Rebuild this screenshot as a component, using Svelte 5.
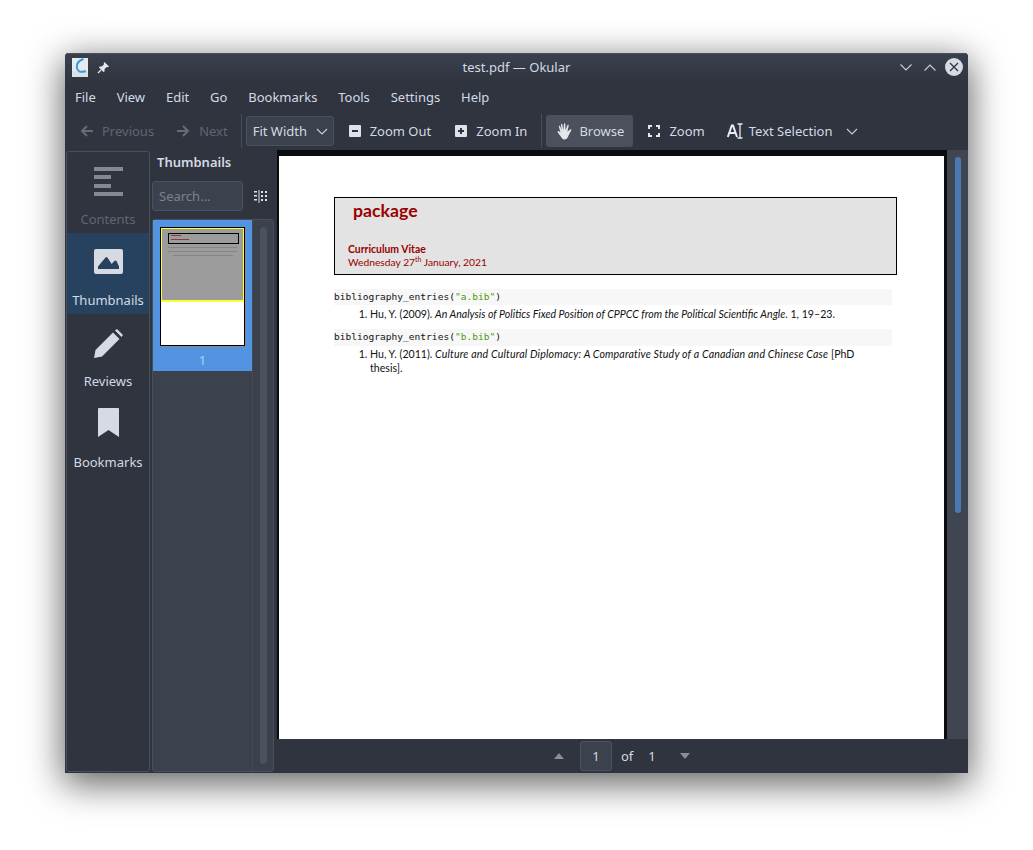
<script>
  const menus = ['File', 'View', 'Edit', 'Go', 'Bookmarks', 'Tools', 'Settings', 'Help'];
</script>

<div class="desktop">
  <div class="window">
    <header class="titlebar">
      <svg class="logo" width="17" height="19" viewBox="0 0 17 19">
        <rect width="16" height="19" fill="#e8ebee" />
        <path d="M0 14h16M0 16h16M0 18h16" stroke="#d2d6da" />
        <path d="M11.500 1C7 2.500 4.500 6 4.800 9.500c.3 3.500 3.500 5.500 9 3.500" fill="none" stroke="#2f9fe0" stroke-width="2" />
      </svg>
      <svg class="pin" width="13" height="13" viewBox="0 0 13 13">
        <path d="M7.500 1 12 5.500 10.800 6.300 9.700 6 7.600 8.100 7.500 10.400 6.400 11 2 6.600 2.600 5.500 4.900 5.400 7 3.300 6.700 2.200z" fill="#e4e7ec" />
        <path d="M4 9 1 12" stroke="#e4e7ec" stroke-width="1.300" />
      </svg>
      <span class="wintitle">test.pdf — Okular</span>
      <div class="winbtns">
        <svg width="14" height="9" viewBox="0 0 14 9"><path d="M1.500 1.500 7 7l5.500-5.500" class="chev" /></svg>
        <svg width="14" height="9" viewBox="0 0 14 9"><path d="M1.500 7.500 7 2l5.500 5.500" class="chev" /></svg>
        <svg class="close" width="18" height="18" viewBox="0 0 18 18">
          <circle cx="9" cy="9" r="9" fill="#d8dce2" />
          <path d="M5 5l8 8M13 5l-8 8" stroke="#2f343f" stroke-width="1.300" />
        </svg>
      </div>
    </header>

    <nav class="menubar">
      {#each menus as m}
        <span>{m}</span>
      {/each}
    </nav>

    <div class="toolbar">
      <span class="tool dis prev">
        <svg width="14" height="12" viewBox="0 0 14 12"><path d="M7 1 2 6l5 5M2 6h11" class="arrow" /></svg>
        Previous
      </span>
      <span class="tool dis next">
        <svg width="14" height="12" viewBox="0 0 14 12"><path d="M7 1l5 5-5 5M12 6H1" class="arrow" /></svg>
        Next
      </span>
      <i class="sep"></i>
      <div class="combo">
        Fit Width
        <svg width="12" height="7" viewBox="0 0 12 7"><path d="M1 1l5 5 5-5" class="chev" /></svg>
      </div>
      <span class="tool zoomout">
        <svg width="12" height="12" viewBox="0 0 12 12"><rect width="12" height="12" rx="1" fill="#dfe3e8" /><rect x="3" y="5" width="6" height="2" fill="#2f343f" /></svg>
        Zoom Out
      </span>
      <span class="tool zoomin">
        <svg width="12" height="12" viewBox="0 0 12 12"><rect width="12" height="12" rx="1" fill="#dfe3e8" /><path d="M3 6h6M6 3v6" stroke="#2f343f" stroke-width="2" /></svg>
        Zoom In
      </span>
      <i class="sep sep2"></i>
      <span class="tool browse">
        <svg width="16" height="17" viewBox="0 0 16 17">
          <path d="M3.500 13C2 11 .7 9.500.6 8.700c0-.7.8-1 1.400-.5l1.500 1.300L1.800 3.500c-.2-.8 1-1.200 1.300-.4l1.700 4.500-.9-6c-.1-.9 1.200-1.100 1.400-.2L6.500 7l.4-6c0-.9 1.300-.9 1.400 0l.3 6.200L10.400 2.300c.3-.8 1.500-.4 1.300.4l-1.300 6 2.700-2.300c.7-.5 1.600.2 1.100 1L11.800 12c-.9 2.500-2 4.500-4.500 4.500-1.800 0-3-2-3.800-3.500z" fill="#e3e6ea" />
        </svg>
        Browse
      </span>
      <span class="tool zoomtool">
        <svg width="12" height="12" viewBox="0 0 12 12"><path d="M1 4V1h3M8 1h3v3M11 8v3H8M4 11H1V8" fill="none" stroke="#e3e6ea" stroke-width="2" /></svg>
        Zoom
      </span>
      <span class="tool textsel">
        <svg width="16" height="16" viewBox="0 0 16 16">
          <path d="M.8 14 4.800 2.500h1.200L10 14M2.300 10h6.200" fill="none" stroke="#e8ebef" stroke-width="2" />
          <path d="M10.500 1h5M10.500 15h5M13 1v14" fill="none" stroke="#e8ebef" stroke-width="1.300" />
        </svg>
        Text Selection
      </span>
      <svg class="more" width="12" height="7" viewBox="0 0 12 7"><path d="M1 1l5 5 5-5" class="chev" /></svg>
    </div>

    <div class="main">
      <aside class="sidebar">
        <div class="side dis">
          <svg width="29" height="29" viewBox="0 0 29 29">
            <path d="M0 0h29v4H0zM0 8h17v4H0zM0 17h17v4H0zM0 25h29v4H0z" fill="#85888e" />
          </svg>
          <span>Contents</span>
        </div>
        <div class="side active">
          <svg width="29" height="25" viewBox="0 0 29 25">
            <path fill-rule="evenodd" d="M2 0h25a2 2 0 0 1 2 2v21a2 2 0 0 1-2 2H2a2 2 0 0 1-2-2V2a2 2 0 0 1 2-2zM4 20h21v-2.500l-2.500-5.500c-.7-.8-1.500-.8-2.200 0l-2.600 3-4.200-6.300c-.7-.8-1.500-.8-2.200 0L4 17.500z" fill="#d5dae3" />
          </svg>
          <span>Thumbnails</span>
        </div>
        <div class="side">
          <svg width="29" height="29" viewBox="0 0 29 29">
            <path d="M0 29l1.500-8L19 3.500 25.500 10 8 27.500zM21 1.500l2-1.500 6 6-1.500 2z" fill="#d5dae3" />
          </svg>
          <span>Reviews</span>
        </div>
        <div class="side book">
          <svg width="21" height="29" viewBox="0 0 21 29">
            <path d="M1 0h19a1 1 0 0 1 1 1v28l-10.500-7L0 29V1a1 1 0 0 1 1-1z" fill="#d5dae3" />
          </svg>
          <span>Bookmarks</span>
        </div>
      </aside>

      <section class="panel">
        <h4>Thumbnails</h4>
        <div class="searchrow">
          <div class="search">Search...</div>
          <svg width="14" height="13" viewBox="0 0 14 13" fill="#dfe3e8">
            <rect x="0" y="1" width="3" height="1.500" /><rect x="0" y="5" width="3" height="1.500" /><rect x="0" y="9" width="3" height="1.500" />
            <rect x="4.500" y="0" width="1" height="13" />
            <rect x="7" y="1" width="2" height="2" /><rect x="11" y="1" width="2" height="2" />
            <rect x="7" y="5" width="2" height="2" /><rect x="11" y="5" width="2" height="2" />
            <rect x="7" y="9" width="2" height="2" /><rect x="11" y="9" width="2" height="2" />
          </svg>
        </div>
        <div class="thumblist">
          <div class="thumbcol">
            <div class="thumbitem">
              <div class="thumb">
                <div class="viewport">
                  <div class="t-box">
                    <div class="t-red"></div>
                    <div class="t-red wide"></div>
                  </div>
                  <div class="t-line"></div>
                  <div class="t-line"></div>
                  <div class="t-line short"></div>
                </div>
              </div>
              <span class="thumbnum">1</span>
            </div>
          </div>
          <div class="thumbscroll"><div></div></div>
        </div>
      </section>

      <section class="viewer">
        <div class="docrow">
          <div class="docarea">
            <article class="page">
              <div class="titlebox">
                <div class="pkg">package</div>
                <div class="cv">Curriculum Vitae</div>
                <div class="date">Wednesday 27<sup>th</sup> January, 2021</div>
              </div>
              <div class="code">bibliography_entries(<span>"a.bib"</span>)</div>
              <ol class="refs"><li>Hu, Y. (2009). <em>An Analysis of Politics Fixed Position of CPPCC from the Political Scientific Angle</em>. 1, 19–23.</li></ol>
              <div class="code second">bibliography_entries(<span>"b.bib"</span>)</div>
              <ol class="refs wide"><li>Hu, Y. (2011). <em>Culture and Cultural Diplomacy: A Comparative Study of a Canadian and Chinese Case</em> [PhD thesis].</li></ol>
            </article>
          </div>
          <div class="vscroll"><div></div></div>
        </div>
        <footer class="pager">
          <svg width="10" height="6" viewBox="0 0 10 6"><path d="M5 0l5 6H0z" fill="#8a8e96" /></svg>
          <div class="pagebox">1</div>
          <span class="of">of</span>
          <span class="total">1</span>
          <svg width="10" height="6" viewBox="0 0 10 6"><path d="M0 0h10L5 6z" fill="#8a8e96" /></svg>
        </footer>
      </section>
    </div>
  </div>
</div>

<style>
  :global(body) {
    margin: 0;
    background: #fff;
  }

  .desktop {
    width: 1033px;
    height: 850px;
    padding: 53px 0 0 65px;
    box-sizing: border-box;
    overflow: hidden;
    font-family: "Noto Sans", sans-serif;
    font-size: 13px;
    color: #d3dae3;
  }

  .window {
    width: 903px;
    height: 720px;
    background: #2f343f;
    border-radius: 4px 4px 0 0;
    box-shadow: 0 9px 36px 2px rgba(0, 0, 0, 0.62);
    display: flex;
    flex-direction: column;
    overflow: hidden;
  }

  .chev {
    fill: none;
    stroke: #c8ced6;
    stroke-width: 1.1;
  }

  .arrow {
    fill: none;
    stroke: #666c76;
    stroke-width: 2;
  }

  .titlebar {
    height: 28px;
    flex: none;
    display: flex;
    align-items: center;
    padding: 0 5px 0 7px;
    background: linear-gradient(#3b4050, #30353f);
    box-shadow: inset 0 1px 0 #4b505e;
    position: relative;
  }

  .pin {
    margin-left: 8px;
  }

  .wintitle {
    position: absolute;
    left: 0;
    right: 0;
    text-align: center;
    pointer-events: none;
  }

  .winbtns {
    margin-left: auto;
    display: flex;
    align-items: center;
    gap: 10px;
  }

  .close {
    margin-left: -2px;
  }

  .menubar {
    height: 31px;
    flex: none;
    display: flex;
    align-items: center;
    gap: 20.85px;
    padding-left: 10px;
  }

  .toolbar {
    height: 38px;
    flex: none;
    display: flex;
    align-items: center;
    padding-left: 15px;
    white-space: nowrap;
  }

  .tool {
    display: flex;
    align-items: center;
    gap: 8px;
  }

  .dis {
    color: #5f6671;
  }

  .next {
    margin-left: 22px;
    gap: 9px;
  }

  .sep {
    width: 1px;
    height: 34px;
    background: #474c58;
    margin: 0 4px 0 13px;
  }

  .combo {
    width: 88px;
    height: 30px;
    box-sizing: border-box;
    padding: 0 5px 0 6px;
    display: flex;
    align-items: center;
    justify-content: space-between;
    background: #3c414e;
    border: 1px solid #4c515f;
    border-radius: 3px;
  }

  .zoomout {
    margin-left: 15px;
    gap: 9px;
  }

  .zoomin {
    margin-left: 24px;
    gap: 9px;
  }

  .sep2 {
    margin: 0 4px 0 14px;
  }

  .browse {
    width: 87px;
    height: 32px;
    box-sizing: border-box;
    padding-left: 11px;
    gap: 6px;
    background: #4b505c;
    border-radius: 3px;
  }

  .zoomtool {
    margin-left: 15px;
    gap: 9px;
  }

  .textsel {
    margin-left: 22px;
    gap: 6px;
  }

  .more {
    margin-left: 14px;
  }

  .main {
    flex: 1;
    min-height: 0;
    display: flex;
  }

  .sidebar {
    width: 84px;
    box-sizing: border-box;
    margin: 1px 0 1px 1px;
    border: 1px solid #4a4f5c;
    border-radius: 3px;
    flex: none;
  }

  .side {
    height: 81px;
    display: flex;
    flex-direction: column;
    align-items: center;
    box-sizing: border-box;
    padding-top: 15px;
  }

  .side span {
    margin-top: auto;
    margin-bottom: 5px;
  }

  .active {
    background: #26425f;
    padding-top: 16px;
  }

  .book {
    padding-top: 13px;
  }

  .panel {
    width: 122px;
    margin-left: 2px;
    flex: none;
    display: flex;
    flex-direction: column;
  }

  h4 {
    margin: 0;
    padding: 3px 0 0 5px;
    height: 31px;
    box-sizing: border-box;
    font-size: 13px;
    font-weight: 600;
    line-height: 18px;
  }

  .searchrow {
    display: flex;
    align-items: center;
    gap: 11px;
  }

  .search {
    width: 91px;
    height: 30px;
    box-sizing: border-box;
    padding-left: 6px;
    line-height: 28px;
    color: #7d838d;
    background: #3c414e;
    border: 1px solid #4c515f;
    border-radius: 3px;
  }

  .thumblist {
    flex: 1;
    margin: 8px 0 1px;
    border: 1px solid #4a4f5c;
    border-radius: 3px;
    background: #3c414e;
    display: flex;
    min-height: 0;
  }

  .thumbcol {
    width: 99px;
    flex: none;
  }

  .thumbitem {
    height: 151px;
    box-sizing: border-box;
    background: #5294e2;
    padding-top: 7px;
    display: flex;
    flex-direction: column;
    align-items: center;
  }

  .thumb {
    width: 85px;
    height: 119px;
    box-sizing: border-box;
    border: 1px solid #000;
    background: #fff;
    box-shadow: 1px 1px 0 #8a8a8a;
  }

  .viewport {
    height: 74px;
    box-sizing: border-box;
    background: #9c9c9c;
    border: 1px solid #ffff33;
    border-bottom-width: 2px;
    padding: 4px 6px 0;
  }

  .t-box {
    width: 71px;
    height: 11px;
    box-sizing: border-box;
    border: 1px solid #000;
    padding: 1px 0 0 2px;
  }

  .t-red {
    width: 10px;
    height: 1px;
    background: #8c3b3b;
    margin-bottom: 3px;
  }

  .t-red.wide {
    width: 18px;
  }

  .t-line {
    height: 1px;
    background: #868686;
    margin: 3px 0 0 0;
  }

  .t-line.short {
    width: 60px;
    margin-left: 5px;
  }

  .thumbnum {
    margin-top: 5px;
    color: #a6d3f5;
  }

  .thumbscroll {
    flex: 1;
    border-left: 1px solid #444955;
    display: flex;
    justify-content: center;
    padding: 7px 0;
  }

  .thumbscroll div {
    width: 7px;
    background: #4c515d;
    border-radius: 4px;
  }

  .viewer {
    flex: 1;
    min-width: 0;
    margin-left: 3px;
    display: flex;
    flex-direction: column;
  }

  .docrow {
    flex: 1;
    min-height: 0;
    display: flex;
  }

  .docarea {
    flex: 1;
    min-width: 0;
    overflow: hidden;
    background: #0b0c0e;
    padding: 6px 3px 0 2px;
  }

  .page {
    height: 100%;
    background: #fff;
    box-sizing: border-box;
    padding: 41px 52px 0 55px;
    font-family: Lato, sans-serif;
    font-size: 10.4px;
    line-height: 13px;
    color: #111;
  }

  .titlebox {
    width: 563px;
    height: 78px;
    box-sizing: border-box;
    background: #e3e3e3;
    border: 1px solid #000;
    padding-left: 13px;
    color: #990000;
    margin-bottom: 14px;
  }

  .pkg {
    font-size: 17.7px;
    font-weight: 700;
    line-height: 24px;
    margin: 1px 0 0 5px;
    height: 44px;
  }

  .cv {
    font-weight: 700;
  }

  .date {
    font-size: 10.25px;
    line-height: 13px;
  }

  sup {
    font-size: 7px;
    line-height: 0;
    vertical-align: 4px;
  }

  .code {
    width: 558px;
    height: 16px;
    background: #f7f7f7;
    font-family: "DejaVu Sans Mono", monospace;
    font-size: 9.57px;
    line-height: 15px;
    color: #111;
  }

  .code.second {
    height: 17px;
    margin-top: 8px;
  }

  .code span {
    color: #4e9a06;
  }

  .refs {
    margin: 2px 0 0;
    padding: 0 40px 0 36px;
    width: 486px;
    line-height: 14px;
    font-size: 10.6px;
  }

  .refs.wide {
    margin-top: 1px;
  }

  .refs.wide em {
    letter-spacing: 0.17px;
  }

  .vscroll {
    width: 21px;
    flex: none;
    background: #3f4551;
    padding: 7px 7px 0 8px;
    box-sizing: border-box;
  }

  .vscroll div {
    width: 6px;
    height: 356px;
    border-radius: 3px;
    background: #4a78b5;
  }

  .pager {
    height: 34px;
    flex: none;
    display: flex;
    align-items: center;
    padding-left: 277px;
  }

  .pagebox {
    width: 32px;
    height: 30px;
    box-sizing: border-box;
    margin-left: 16px;
    text-align: center;
    line-height: 28px;
    background: #3c414e;
    border: 1px solid #4c515f;
    border-radius: 3px;
  }

  .of {
    margin-left: 9px;
  }

  .total {
    margin: 0 24px 0 15px;
  }
</style>
